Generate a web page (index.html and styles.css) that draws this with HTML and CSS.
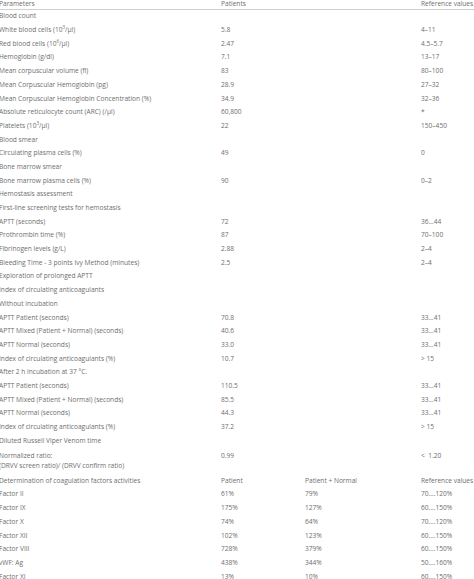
FILE: index.html
```html
<!DOCTYPE html>
<html>
<head>
<meta charset="utf-8">
<link rel="stylesheet" href="styles.css">
</head>
<body>
<table class="lab">
  <colgroup>
    <col class="c-param"><col class="c-pat"><col class="c-mix"><col class="c-ref">
  </colgroup>
  <thead>
    <tr><th>Parameters</th><th>Patients</th><th></th><th>Reference values</th></tr>
  </thead>
  <tbody>
    <tr><td>Blood count</td><td></td><td></td><td></td></tr>
    <tr><td>White blood cells (10<sup>3</sup>/μl)</td><td>5.8</td><td></td><td>4–11</td></tr>
    <tr><td>Red blood cells (10<sup>6</sup>/μl)</td><td>2.47</td><td></td><td>4.5–5.7</td></tr>
    <tr><td>Hemoglobin (g/dl)</td><td>7.1</td><td></td><td>13–17</td></tr>
    <tr><td>Mean corpuscular volume (fl)</td><td>83</td><td></td><td>80–100</td></tr>
    <tr><td>Mean Corpuscular Hemoglobin (pg)</td><td>28.9</td><td></td><td>27–32</td></tr>
    <tr><td>Mean Corpuscular Hemoglobin Concentration (%)</td><td>34.9</td><td></td><td>32–36</td></tr>
    <tr><td>Absolute reticulocyte count (ARC) (/μl)</td><td>60,800</td><td></td><td>*</td></tr>
    <tr><td>Platelets (10<sup>3</sup>/μl)</td><td>22</td><td></td><td>150–450</td></tr>
    <tr><td>Blood smear</td><td></td><td></td><td></td></tr>
    <tr><td>Circulating plasma cells (%)</td><td>49</td><td></td><td>0</td></tr>
    <tr><td>Bone marrow smear</td><td></td><td></td><td></td></tr>
    <tr><td>Bone marrow plasma cells (%)</td><td>90</td><td></td><td>0–2</td></tr>
    <tr><td>Hemostasis assessment</td><td></td><td></td><td></td></tr>
    <tr><td>First-line screening tests for hemostasis</td><td></td><td></td><td></td></tr>
    <tr><td>APTT (seconds)</td><td>72</td><td></td><td>36…44</td></tr>
    <tr><td>Prothrombin time (%)</td><td>87</td><td></td><td>70–100</td></tr>
    <tr><td>Fibrinogen levels (g/L)</td><td>2.88</td><td></td><td>2–4</td></tr>
    <tr><td>Bleeding Time - 3 points Ivy Method (minutes)</td><td>2.5</td><td></td><td>2–4</td></tr>
    <tr><td>Exploration of prolonged APTT</td><td></td><td></td><td></td></tr>
    <tr><td>Index of circulating anticoagulants</td><td></td><td></td><td></td></tr>
    <tr><td>Without incubation</td><td></td><td></td><td></td></tr>
    <tr><td>APTT Patient (seconds)</td><td>70.8</td><td></td><td>33…41</td></tr>
    <tr><td>APTT Mixed (Patient + Normal) (seconds)</td><td>40.6</td><td></td><td>33…41</td></tr>
    <tr><td>APTT Normal (seconds)</td><td>33.0</td><td></td><td>33…41</td></tr>
    <tr><td>Index of circulating anticoagulants (%)</td><td>10.7</td><td></td><td>&gt; 15</td></tr>
    <tr><td>After 2 h incubation at 37 °C.</td><td></td><td></td><td></td></tr>
    <tr><td>APTT Patient (seconds)</td><td>110.5</td><td></td><td>33…41</td></tr>
    <tr><td>APTT Mixed (Patient + Normal) (seconds)</td><td>85.5</td><td></td><td>33…41</td></tr>
    <tr><td>APTT Normal (seconds)</td><td>44.3</td><td></td><td>33…41</td></tr>
    <tr><td>Index of circulating anticoagulants (%)</td><td>37.2</td><td></td><td>&gt; 15</td></tr>
    <tr><td>Diluted Russell Viper Venom time</td><td></td><td></td><td></td></tr>
    <tr class="tall"><td>Normalized ratio:<br>(DRVV screen ratio)/ (DRVV confirm ratio)</td><td>0.99</td><td></td><td>&lt;&nbsp; 1.20</td></tr>
    <tr><td>Determination of coagulation factors activities</td><td>Patient</td><td>Patient + Normal</td><td>Reference values</td></tr>
    <tr><td>Factor II</td><td>61%</td><td>79%</td><td>70….120%</td></tr>
    <tr><td>Factor IX</td><td>175%</td><td>127%</td><td>60….150%</td></tr>
    <tr><td>Factor X</td><td>74%</td><td>64%</td><td>70….120%</td></tr>
    <tr><td>Factor XII</td><td>102%</td><td>123%</td><td>60….150%</td></tr>
    <tr><td>Factor VIII</td><td>728%</td><td>379%</td><td>60….150%</td></tr>
    <tr><td>vWF: Ag</td><td>438%</td><td>344%</td><td>50….160%</td></tr>
    <tr><td>Factor XI</td><td>13%</td><td>10%</td><td>60….150%</td></tr>
  </tbody>
</table>
</body>
</html>
```
FILE: styles.css
```css
html, body {
  margin: 0;
  padding: 0;
  background: #ffffff;
  overflow: hidden;
}
.lab {
  border-collapse: collapse;
  table-layout: fixed;
  width: 480px;
  margin: -2px 0 0 -1px;
  font-family: "Open Sans", "Noto Sans", sans-serif;
  font-size: 6.6px;
  color: #6e6e6e;
}
.c-param { width: 222px; }
.c-pat { width: 84px; }
.c-mix { width: 116px; }
.c-ref { width: 58px; }
.lab th {
  font-weight: normal;
  text-align: left;
  line-height: 10px;
  padding: 1px 0 0 0;
  white-space: nowrap;
  border-bottom: 1px solid #cfcfcf;
}
.lab td {
  text-align: left;
  vertical-align: top;
  line-height: 10px;
  padding: 1.4px 0 2.3px 0;
  white-space: nowrap;
}
.lab sup {
  font-size: 4.5px;
  line-height: 0;
  vertical-align: 3px;
}
.lab tr.tall td {
  padding-top: 3.2px;
  padding-bottom: 3.2px;
}
```
